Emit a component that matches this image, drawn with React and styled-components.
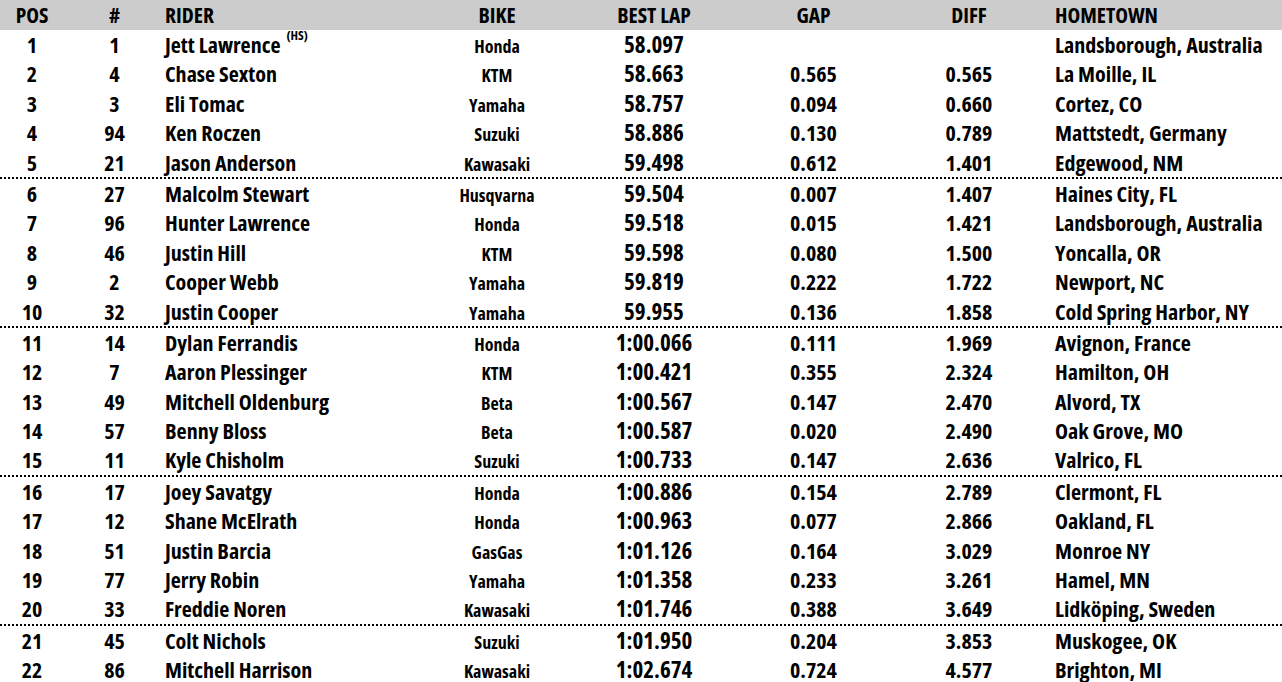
import React from "react";
import styled, { createGlobalStyle } from "styled-components";

const Global = createGlobalStyle`
  html, body { margin: 0; padding: 0; background: #fff; }
  body { font-family: "Open Sans", "Liberation Sans Narrow", "DejaVu Sans Condensed", sans-serif; color: #000; }
`;

const COLS = "64px 101px 265px 134px 180px 139px 172px 1fr";

const Table = styled.div`
  width: 1282px;
  font-family: "Open Sans", "Liberation Sans Narrow", sans-serif;
  font-stretch: 75%;
  font-weight: 700;
`;

const HeadRow = styled.div`
  display: grid;
  grid-template-columns: ${COLS};
  height: 30px;
  align-items: center;
  background: #cccccc;
  font-size: 21.5px;
  line-height: 1;
`;

const Group = styled.div`
  & + & { border-top: 2px dotted #000; }
`;

const Row = styled.div`
  display: grid;
  grid-template-columns: ${COLS};
  box-sizing: border-box;
  height: 29.4px;
  padding-top: 3px;
  align-items: baseline;
  font-size: 22px;
  line-height: 1;
`;

const Cell = styled.div`
  text-align: ${(p) => p.$align || "center"};
  font-size: ${(p) => p.$size || "inherit"};
  white-space: nowrap;
`;

const Sup = styled.sup`
  font-size: 13px;
  vertical-align: top;
  position: relative;
  top: -4px;
  margin-left: 6px;
`;

const data = [
  [1, 1, "Jett Lawrence", "Honda", "58.097", "", "", "Landsborough, Australia", true],
  [2, 4, "Chase Sexton", "KTM", "58.663", "0.565", "0.565", "La Moille, IL"],
  [3, 3, "Eli Tomac", "Yamaha", "58.757", "0.094", "0.660", "Cortez, CO"],
  [4, 94, "Ken Roczen", "Suzuki", "58.886", "0.130", "0.789", "Mattstedt, Germany"],
  [5, 21, "Jason Anderson", "Kawasaki", "59.498", "0.612", "1.401", "Edgewood, NM"],
  [6, 27, "Malcolm Stewart", "Husqvarna", "59.504", "0.007", "1.407", "Haines City, FL"],
  [7, 96, "Hunter Lawrence", "Honda", "59.518", "0.015", "1.421", "Landsborough, Australia"],
  [8, 46, "Justin Hill", "KTM", "59.598", "0.080", "1.500", "Yoncalla, OR"],
  [9, 2, "Cooper Webb", "Yamaha", "59.819", "0.222", "1.722", "Newport, NC"],
  [10, 32, "Justin Cooper", "Yamaha", "59.955", "0.136", "1.858", "Cold Spring Harbor, NY"],
  [11, 14, "Dylan Ferrandis", "Honda", "1:00.066", "0.111", "1.969", "Avignon, France"],
  [12, 7, "Aaron Plessinger", "KTM", "1:00.421", "0.355", "2.324", "Hamilton, OH"],
  [13, 49, "Mitchell Oldenburg", "Beta", "1:00.567", "0.147", "2.470", "Alvord, TX"],
  [14, 57, "Benny Bloss", "Beta", "1:00.587", "0.020", "2.490", "Oak Grove, MO"],
  [15, 11, "Kyle Chisholm", "Suzuki", "1:00.733", "0.147", "2.636", "Valrico, FL"],
  [16, 17, "Joey Savatgy", "Honda", "1:00.886", "0.154", "2.789", "Clermont, FL"],
  [17, 12, "Shane McElrath", "Honda", "1:00.963", "0.077", "2.866", "Oakland, FL"],
  [18, 51, "Justin Barcia", "GasGas", "1:01.126", "0.164", "3.029", "Monroe NY"],
  [19, 77, "Jerry Robin", "Yamaha", "1:01.358", "0.233", "3.261", "Hamel, MN"],
  [20, 33, "Freddie Noren", "Kawasaki", "1:01.746", "0.388", "3.649", "Lidköping, Sweden"],
  [21, 45, "Colt Nichols", "Suzuki", "1:01.950", "0.204", "3.853", "Muskogee, OK"],
  [22, 86, "Mitchell Harrison", "Kawasaki", "1:02.674", "0.724", "4.577", "Brighton, MI"],
];

const groups = [];
for (let i = 0; i < data.length; i += 5) groups.push(data.slice(i, i + 5));

export default function App() {
  return (
    <>
      <Global />
      <Table>
        <HeadRow>
          <Cell>POS</Cell>
          <Cell>#</Cell>
          <Cell $align="left">RIDER</Cell>
          <Cell>BIKE</Cell>
          <Cell>BEST LAP</Cell>
          <Cell>GAP</Cell>
          <Cell>DIFF</Cell>
          <Cell $align="left">HOMETOWN</Cell>
        </HeadRow>
        {groups.map((g, gi) => (
          <Group key={gi}>
            {g.map((r) => (
              <Row key={r[0]}>
                <Cell>{r[0]}</Cell>
                <Cell>{r[1]}</Cell>
                <Cell $align="left">
                  {r[2]}
                  {r[8] && <Sup>(HS)</Sup>}
                </Cell>
                <Cell $size="18px">{r[3]}</Cell>
                <Cell $size="23px">{r[4]}</Cell>
                <Cell $size="22px">{r[5]}</Cell>
                <Cell $size="22px">{r[6]}</Cell>
                <Cell $align="left">{r[7]}</Cell>
              </Row>
            ))}
          </Group>
        ))}
      </Table>
    </>
  );
}
